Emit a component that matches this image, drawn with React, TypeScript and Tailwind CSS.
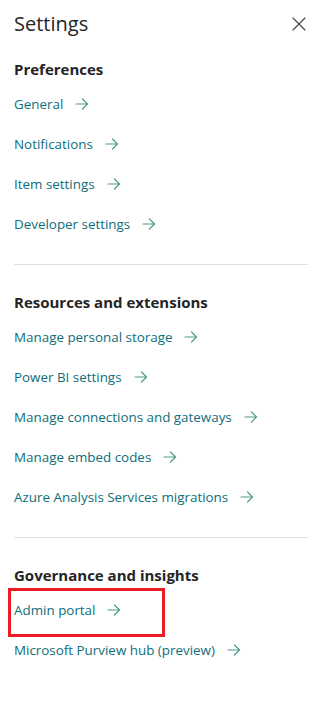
import React from "react";

const font = { fontFamily: '"Segoe UI", "Open Sans", "Noto Sans", sans-serif' };

function Arrow() {
  return (
    <svg width="14" height="14" viewBox="0 0 14 14" fill="none" className="ml-[12px] shrink-0">
      <path d="M1 7h11.5M7.5 2l5 5-5 5" stroke="#4f9c8c" strokeWidth="1.2" strokeLinecap="round" strokeLinejoin="round" />
    </svg>
  );
}

function LinkRow({ label, boxed }: { label: string; boxed?: boolean }) {
  return (
    <div className="relative h-10 flex items-center">
      <span className="text-[13.4px] text-[#0f6e7a] leading-5">{label}</span>
      <Arrow />
      {boxed && (
        <div className="absolute top-[-2px] left-[-6px] w-[157px] h-[49px] border-[3px] border-[#ed1c24]" />
      )}
    </div>
  );
}

function Section({ title, items, boxedIndex }: { title: string; items: string[]; boxedIndex?: number }) {
  return (
    <div>
      <h2 className="h-6 leading-6 text-[15px] font-bold text-[#242424]">{title}</h2>
      <div className="mt-[3px]">
        {items.map((it, i) => (
          <LinkRow key={it} label={it} boxed={i === boxedIndex} />
        ))}
      </div>
    </div>
  );
}

export default function App() {
  return (
    <div className="w-[322px] h-[704px] bg-white px-[14px] overflow-hidden" style={font}>
      {/* Header */}
      <div className="flex items-center justify-between pt-[10px] h-[38px]">
        <h1 className="text-[20px] leading-7 text-[#242424]">Settings</h1>
        <button className="mr-[2px] p-0" aria-label="Close">
          <svg width="14" height="14" viewBox="0 0 14 14" fill="none">
            <path d="M1 1l12 12M13 1L1 13" stroke="#424242" strokeWidth="1.1" strokeLinecap="round" />
          </svg>
        </button>
      </div>

      <div className="mt-[19px]">
        <Section title="Preferences" items={["General", "Notifications", "Item settings", "Developer settings"]} />
      </div>

      <div className="mt-[20px] h-px bg-[#e0e0e0]" />

      <div className="mt-[25px]">
        <Section
          title="Resources and extensions"
          items={[
            "Manage personal storage",
            "Power BI settings",
            "Manage connections and gateways",
            "Manage embed codes",
            "Azure Analysis Services migrations",
          ]}
        />
      </div>

      <div className="mt-[20px] h-px bg-[#e0e0e0]" />

      <div className="mt-[25px]">
        <Section
          title="Governance and insights"
          items={["Admin portal", "Microsoft Purview hub (preview)"]}
          boxedIndex={0}
        />
      </div>
    </div>
  );
}
